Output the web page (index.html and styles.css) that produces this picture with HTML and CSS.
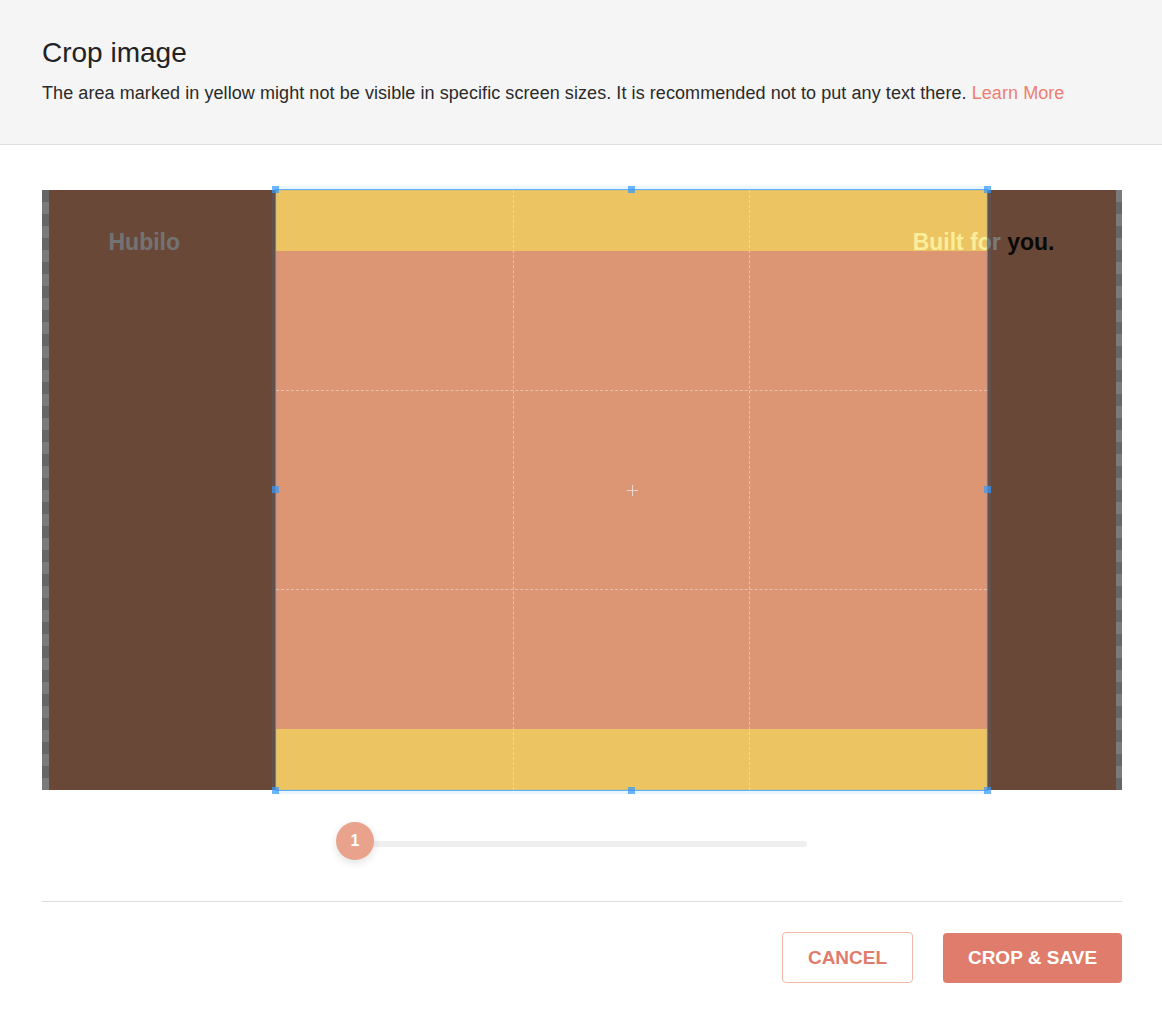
FILE: index.html
```html
<!DOCTYPE html>
<html>
<head>
<meta charset="utf-8">
<title>Crop image</title>
<link rel="stylesheet" href="styles.css">
</head>
<body>
<div class="dialog">
  <header class="head">
    <h1 class="title">Crop image</h1>
    <p class="desc">The area marked in yellow might not be visible in specific screen sizes. It is recommended not to put any text there. <a class="learn">Learn More</a></p>
  </header>
  <main class="content">
    <div class="cropper">
      <div class="canvas">
        <div class="photo">
          <span class="brand">Hubilo</span>
          <span class="tagline">Built for <span class="dark">you.</span></span>
        </div>
      </div>
      <div class="modal"></div>
      <div class="crop-box">
        <div class="view-box">
          <div class="photo photo-copy">
            <span class="brand">Hubilo</span>
            <span class="tagline">Built for <span class="dark">you.</span></span>
          </div>
          <div class="safe safe-top"></div>
          <div class="safe safe-bottom"></div>
        </div>
        <span class="dashed dashed-h"></span>
        <span class="dashed dashed-v"></span>
        <span class="center"></span>
        <span class="line line-n"></span>
        <span class="line line-s"></span>
        <span class="line line-w"></span>
        <span class="line line-e"></span>
        <span class="point point-nw"></span>
        <span class="point point-n"></span>
        <span class="point point-ne"></span>
        <span class="point point-w"></span>
        <span class="point point-e"></span>
        <span class="point point-sw"></span>
        <span class="point point-s"></span>
        <span class="point point-se"></span>
      </div>
    </div>
    <div class="slider">
      <div class="track">
        <span class="thumb">1</span>
      </div>
    </div>
  </main>
  <footer class="foot">
    <button class="btn btn-outline">CANCEL</button>
    <button class="btn btn-fill">CROP &amp; SAVE</button>
  </footer>
</div>
</body>
</html>
```
FILE: styles.css
```css
* { box-sizing: border-box; }

body {
  margin: 0;
  background: #ffffff;
  font-family: "Liberation Sans", Arial, Helvetica, sans-serif;
  color: #222222;
}

.head {
  background: #f5f5f5;
  border-bottom: 1px solid #dddddd;
  padding: 36px 42px 39px;
}

.title {
  margin: 0;
  font-size: 28px;
  line-height: 34px;
  font-weight: 400;
  color: #222222;
}

.desc {
  margin: 11px 0 0;
  font-size: 18px;
  line-height: 24px;
  letter-spacing: 0.07px;
  color: #2a2a2a;
  white-space: nowrap;
}

.learn {
  color: #ef7e70;
  cursor: pointer;
}

.content {
  padding: 45px 40px 54px 42px;
}

/* cropper */
.cropper {
  position: relative;
  height: 600px;
  background-color: #d5d5d5;
  background-image:
    linear-gradient(45deg, #ffffff 25%, transparent 25%, transparent 75%, #ffffff 75%),
    linear-gradient(45deg, #ffffff 25%, transparent 25%, transparent 75%, #ffffff 75%);
  background-size: 24px 24px;
  background-position: 0 0, 12px 12px;
}

.canvas {
  position: absolute;
  inset: 0;
  overflow: hidden;
}

.photo {
  position: absolute;
  top: 0;
  left: 6.5px;
  width: 1067px;
  height: 600px;
  background: #dc9674;
  display: flex;
  justify-content: space-between;
  align-items: flex-start;
  padding: 38px 61px 0 60px;
  font-weight: 700;
  font-size: 23px;
  line-height: 28px;
}

.brand { color: #f0f0f0; }
.tagline { color: #ffffff; }
.dark { color: #141414; }

.modal {
  position: absolute;
  inset: 0;
  background: rgba(0, 0, 0, 0.52);
}

.crop-box {
  position: absolute;
  left: 234px;
  top: 0;
  width: 711px;
  height: 600px;
}

.view-box {
  position: absolute;
  inset: 0;
  overflow: hidden;
  outline: 1px solid rgba(51, 153, 255, 0.75);
}

.photo-copy {
  left: -227.5px;
}

.safe {
  position: absolute;
  left: 0;
  width: 100%;
  height: 61px;
  background: rgba(247, 227, 86, 0.6);
}
.safe-top { top: 0; }
.safe-bottom { bottom: 0; }

.dashed {
  position: absolute;
  border: 0 dashed #eeeeee;
  opacity: 0.5;
}
.dashed-h {
  left: 0;
  width: 100%;
  top: 33.333%;
  height: 33.333%;
  border-top-width: 1px;
  border-bottom-width: 1px;
}
.dashed-v {
  top: 0;
  height: 100%;
  left: 33.333%;
  width: 33.333%;
  border-left-width: 1px;
  border-right-width: 1px;
}

.center {
  position: absolute;
  left: 50%;
  top: 50%;
  width: 0;
  height: 0;
  opacity: 0.75;
}
.center::before,
.center::after {
  content: "";
  position: absolute;
  background: #eeeeee;
}
.center::before { left: -5px; top: 0; width: 11px; height: 1px; }
.center::after { left: 0; top: -5px; width: 1px; height: 11px; }

.line {
  position: absolute;
  background: #3399ff;
  opacity: 0.1;
}
.line-n { top: -4px; left: 0; width: 100%; height: 5px; }
.line-s { bottom: -4px; left: 0; width: 100%; height: 5px; }
.line-w { left: -4px; top: 0; width: 5px; height: 100%; }
.line-e { right: -4px; top: 0; width: 5px; height: 100%; }

.point {
  position: absolute;
  width: 7px;
  height: 7px;
  background: #3399ff;
  opacity: 0.7;
}
.point-nw { left: -4px; top: -4px; }
.point-n { left: 50%; margin-left: -4px; top: -4px; }
.point-ne { right: -4px; top: -4px; }
.point-w { left: -4px; top: 50%; margin-top: -4px; }
.point-e { right: -4px; top: 50%; margin-top: -4px; }
.point-sw { left: -4px; bottom: -4px; }
.point-s { left: 50%; margin-left: -4px; bottom: -4px; }
.point-se { right: -4px; bottom: -4px; }

/* zoom slider */
.slider {
  display: flex;
  justify-content: center;
  margin-top: 51px;
  padding-right: 2px;
}

.track {
  position: relative;
  width: 452px;
  height: 6px;
  border-radius: 3px;
  background: #efefef;
}

.thumb {
  position: absolute;
  left: -19px;
  top: -19px;
  width: 38px;
  height: 38px;
  border-radius: 50%;
  background: #e9a28c;
  color: #ffffff;
  font-weight: 700;
  font-size: 16px;
  display: flex;
  align-items: center;
  justify-content: center;
  box-shadow: 0 3px 8px rgba(0, 0, 0, 0.12);
}

/* footer */
.foot {
  margin: 0 40px 0 42px;
  border-top: 1px solid #dddddd;
  padding-top: 30px;
  display: flex;
  justify-content: flex-end;
  align-items: center;
  gap: 30px;
}

.btn {
  font-family: "Liberation Sans", Arial, Helvetica, sans-serif;
  font-weight: 700;
  font-size: 19px;
  height: 51px;
  border-radius: 4px;
  cursor: pointer;
}

.btn-outline {
  width: 131px;
  background: #ffffff;
  border: 1px solid #f1b8a8;
  color: #e07c6b;
}

.btn-fill {
  width: 179px;
  height: 50px;
  background: #df7c6b;
  border: 0;
  color: #ffffff;
}
```
